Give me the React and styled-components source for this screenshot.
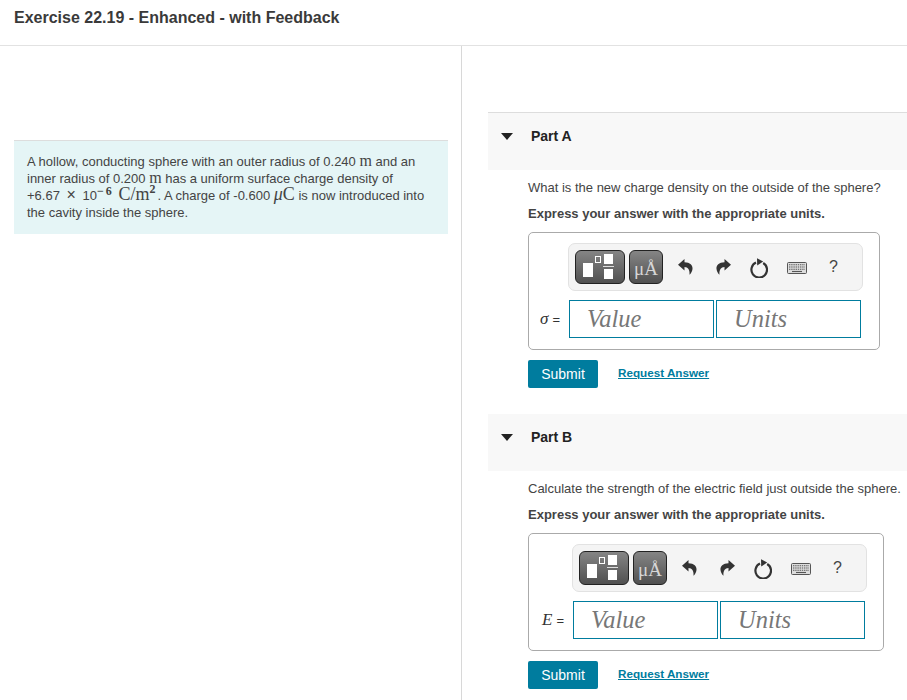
import React from 'react';
import styled, {createGlobalStyle} from 'styled-components';

const GlobalStyle = createGlobalStyle`
html, body {
  margin: 0;
  height: 700px;
  overflow: hidden;
  background: #fff;
  font-family: "Liberation Sans", Arial, sans-serif;
  color: #333;
}
* {
  box-sizing: border-box;
}
`

const TemplateIcon = () => (
  <svg width="48" height="32" viewBox="0 0 48 32">
    <rect x="7" y="12" width="10" height="14" fill="#fff" />
    <rect x="19.5" y="5.5" width="5" height="6" fill="none" stroke="#fff" />
    <rect x="28" y="3" width="9" height="10" fill="#fff" />
    <rect x="27" y="15" width="11" height="1" fill="#ddd" />
    <rect x="28" y="18" width="9" height="10" fill="#fff" />
  </svg>
)

const UndoIcon = ({flip}) => (
  <svg width="15" height="16" viewBox="0 0 15 16" style={flip ? {transform: 'scaleX(-1)'} : undefined}>
    <path d="M6.5 0 L0 5.7 L6.5 11.4 V8 C10 8 12 11 11.5 15.8 C13 14.5 14.2 12.5 14.5 10 C15 6.5 12 3.3 6.5 3.3 Z" fill="#333" />
  </svg>
)

const ResetIcon = () => (
  <svg width="18" height="20" viewBox="0 0 18 20">
    <path d="M6 4.6 A7.8 7.8 0 1 0 13.2 5" fill="none" stroke="#333" strokeWidth="2.2" />
    <path d="M7 0.2 L13.2 3.6 L7.2 7.4 Z" fill="#333" />
  </svg>
)

const KeyboardIcon = () => (
  <svg width="20" height="12" viewBox="0 0 20 12">
    <rect x="0.5" y="0.5" width="19" height="11" rx="1" fill="#ddd" stroke="#555" />
    <path d="M2 2.8 H18 M2 5 H18 M2 7.2 H18" stroke="#555" strokeWidth="1.1" strokeDasharray="1.4 0.8" />
    <path d="M5 9.5 H15" stroke="#555" strokeWidth="1.1" />
  </svg>
)

const Triangle = () => (
  <svg width="12" height="7" viewBox="0 0 12 7">
    <path d="M0 0 H12 L6 7 Z" fill="#222" />
  </svg>
)

const AnswerPart = ({title, question, symbol, labelWidth, first}) => (
  <Part>
    <PartBar $first={first}>
      <Toggle><Triangle /></Toggle>
      <PartTitle>{title}</PartTitle>
    </PartBar>
    <PartBody>
      <Question>{question}</Question>
      <Instruction>Express your answer with the appropriate units.</Instruction>
      <AnswerBox $labelWidth={labelWidth}>
        <Toolbar>
          <ToolButton $width={50}><TemplateIcon /></ToolButton>
          <ToolButton $width={34}><MuGlyph>μÅ</MuGlyph></ToolButton>
          <IconSlot $width={36} $first><UndoIcon /></IconSlot>
          <IconSlot $width={41}><UndoIcon flip /></IconSlot>
          <IconSlot $width={30} $drop={1}><ResetIcon /></IconSlot>
          <IconSlot $width={45} $drop={2}><KeyboardIcon /></IconSlot>
          <IconSlot $width={29}><Help>?</Help></IconSlot>
        </Toolbar>
        <Symbol>
          <i>{symbol}</i> <SymbolEq>=</SymbolEq>
        </Symbol>
        <Inputs>
          <AnswerInput placeholder="Value" readOnly />
          <AnswerInput placeholder="Units" readOnly />
        </Inputs>
      </AnswerBox>
      <Actions>
        <Submit>Submit</Submit>
        <RequestLink href="#">Request Answer</RequestLink>
      </Actions>
    </PartBody>
  </Part>
)

export default function App() {
  return (
    <>
      <GlobalStyle />
      <Header>
        <Title>Exercise 22.19 - Enhanced - with Feedback</Title>
      </Header>
      <Columns>
        <LeftColumn>
          <Problem>
            A hollow, conducting sphere with an outer radius of 0.240 <Unit>m</Unit> and an<br />
            inner radius of 0.200 <Unit>m</Unit> has a uniform surface charge density of<br />
            +6.67 <Times>×</Times> 10<Exp $wide>−6</Exp> <Unit $big>C/m<Exp>2</Exp></Unit>. A charge of -0.600 <Unit $big><i>μ</i>C</Unit> is now introduced into<br />
            the cavity inside the sphere.
          </Problem>
        </LeftColumn>
        <RightColumn>
          <AnswerPart
            first
            title="Part A"
            question="What is the new charge density on the outside of the sphere?"
            symbol="σ"
            labelWidth={39}
          />
          <AnswerPart
            title="Part B"
            question="Calculate the strength of the electric field just outside the sphere."
            symbol="E"
            labelWidth={43}
          />
        </RightColumn>
      </Columns>
    </>
  )
}

const Header = styled.header`
height: 46px;
padding: 9px 14px 0;
border-bottom: 1px solid #e2e2e2;
`
const Title = styled.h1`
margin: 0;
font-size: 16px;
line-height: 18px;
font-weight: bold;
color: #3a3a3a;
`
const Columns = styled.div`
display: grid;
grid-template-columns: 462px 1fr;
height: 654px;
`
const LeftColumn = styled.div`
padding: 94px 13px 0 14px;
border-right: 1px solid #d8d8d8;
`
const Problem = styled.div`
height: 94px;
padding: 12px 13px 0;
background: #e5f5f6;
border-top: 1px solid #ddd;
font-size: 13px;
line-height: 17px;
white-space: nowrap;
color: #444;
`
const Unit = styled.span`
font-family: "Liberation Serif", serif;
font-size: ${props => (props.$big ? '18px' : '16px')};
line-height: 0;
`
const Times = styled.span`
margin: 0 3px;
font-size: 16px;
line-height: 0;
`
const Exp = styled.sup`
margin-right: ${props => (props.$wide ? '1px' : '2px')};
font-family: "Liberation Serif", serif;
font-size: 12px;
font-weight: bold;
line-height: 0;
letter-spacing: ${props => (props.$wide ? '2px' : '0')};
`
const RightColumn = styled.div`
padding: 66px 0 0 26px;
min-width: 0;
`
const Part = styled.section`
margin-bottom: 26px;
`
const PartBar = styled.div`
display: flex;
height: ${props => (props.$first ? '58px' : '57px')};
padding-top: 15px;
background: #f8f8f8;
border-top: ${props => (props.$first ? '1px solid #ddd' : '0')};
`
const Toggle = styled.div`
display: flex;
align-items: center;
height: 16px;
width: 43px;
padding-left: 13px;
`
const PartTitle = styled.h2`
margin: 0;
font-size: 14px;
line-height: 16px;
font-weight: bold;
color: #222;
`
const PartBody = styled.div`
padding-left: 40px;
`
const Question = styled.p`
margin: 9px 0 0;
font-size: 13px;
line-height: 17px;
white-space: nowrap;
color: #444;
`
const Instruction = styled.p`
margin: 9px 0 0;
font-size: 13px;
line-height: 17px;
font-weight: bold;
color: #444;
`
const AnswerBox = styled.div`
display: grid;
grid-template-columns: ${props => props.$labelWidth}px 295px;
grid-template-rows: 48px 38px;
row-gap: 9px;
width: max-content;
margin-top: 10px;
padding: 10px 16px 11px 0;
border: 1px solid #aaa;
border-radius: 5px;
`
const Toolbar = styled.div`
grid-column: 2;
grid-row: 1;
display: flex;
align-items: center;
gap: 4px;
padding-left: 6px;
background: #f4f4f4;
border: 1px solid #e2e2e2;
border-radius: 7px;
`
const ToolButton = styled.div`
display: flex;
align-items: center;
justify-content: center;
width: ${props => props.$width}px;
height: 34px;
border: 1px solid #222;
border-radius: 6px;
background: linear-gradient(#858585, #505050);
`
const MuGlyph = styled.span`
padding-top: 3px;
font-family: "Liberation Serif", serif;
font-size: 19px;
color: #d6d6d6;
`
const IconSlot = styled.div`
display: flex;
align-items: center;
justify-content: center;
width: ${props => props.$width}px;
margin-left: ${props => (props.$first ? '0' : '-4px')};
padding-top: ${props => props.$drop || 0}px;
height: 34px;
`
const Help = styled.span`
font-size: 16px;
color: #444;
`
const Symbol = styled.div`
grid-column: 1;
grid-row: 2;
display: flex;
align-items: center;
justify-content: flex-end;
gap: 4px;
padding-right: 8px;
font-family: "Liberation Serif", serif;
font-size: 17px;
color: #333;
`
const SymbolEq = styled.span`
font-family: "Liberation Sans", sans-serif;
font-size: 13px;
`
const Inputs = styled.div`
grid-column: 2;
grid-row: 2;
display: flex;
gap: 2px;
margin-left: 1px;
`
const AnswerInput = styled.input`
width: 145px;
height: 38px;
padding: 0 0 0 17px;
border: 1px solid #007c9e;
border-radius: 0;
outline: none;
background: #fff;
font-family: "Liberation Serif", serif;
font-style: italic;
font-size: 24.5px;
&::placeholder {
  color: #777;
  opacity: 1;
}
`
const Actions = styled.div`
display: flex;
align-items: flex-start;
gap: 20px;
margin-top: 10px;
`
const Submit = styled.button`
width: 70px;
height: 28px;
padding: 0;
border: 0;
border-radius: 2px;
background: #007c9e;
color: #fff;
font-family: "Liberation Sans", sans-serif;
font-size: 14px;
`
const RequestLink = styled.a`
margin-top: 5px;
font-size: 11.7px;
line-height: 15px;
font-weight: bold;
color: #007c9e;
`
